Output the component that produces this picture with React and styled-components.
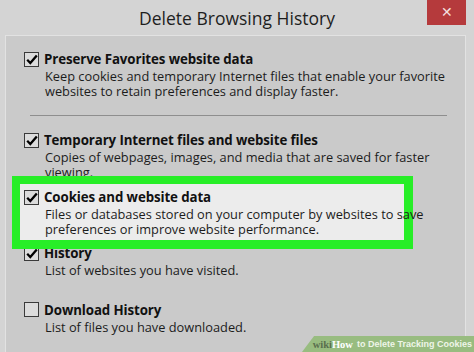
import React from "react";
import styled, { createGlobalStyle } from "styled-components";

// ---------------- Global ----------------

const Global = createGlobalStyle`
  html, body {
    margin: 0;
    padding: 0;
    background: #cdcdcd;
  }
  * { box-sizing: border-box; }
`;

// ---------------- Styled Components ----------------

const Window = styled.div`
  position: relative;
  width: 474px;
  height: 352px;
  overflow: hidden;
  background: #d4d4d4;
  font-family: "Open Sans", "Noto Sans", sans-serif;
  color: #161616;
`;

const TitleBar = styled.div`
  display: grid;
  grid-template-columns: 46px 1fr 46px;
  height: 35px;
`;

const Title = styled.div`
  grid-column: 2;
  text-align: center;
  font-size: 17.5px;
  line-height: 36px;
  color: #1e1e1e;
`;

const CloseBtn = styled.div`
  grid-column: 3;
  width: 39px;
  height: 25px;
  background: #b53a3c;
  color: #f4dede;
  font-size: 14px;
  line-height: 24px;
  text-align: center;
  margin-left: -1px;
`;

const Panel = styled.div`
  margin-left: 5px;
  width: 461px;
  height: 330px;
  background: #cacaca;
  border: 1px solid #e2e2e2;
  border-bottom: none;
  padding: 15px 0 0 18px;
  display: flex;
  flex-direction: column;
`;

const Item = styled.div`
  display: grid;
  grid-template-columns: 15px 1fr;
  column-gap: 5px;
  align-items: center;
  margin-top: ${(p) => p.$top || 0}px;
`;

const Box = styled.div`
  width: 15px;
  height: 15px;
  border: 1px solid #3a3a3a;
  background: #dcdcdc;
  display: flex;
  align-items: center;
  justify-content: center;
`;

const Label = styled.div`
  font-weight: 700;
  font-size: 13.3px;
  line-height: 16px;
  letter-spacing: -0.1px;
  color: #111;
  white-space: nowrap;
`;

const Lines = styled.div`
  grid-column: 2;
  margin-top: 2px;
  padding-left: 1px;
`;

const Desc = styled.div`
  font-size: 12.8px;
  line-height: 14.5px;
  color: #1c1c1c;
  white-space: nowrap;
`;

const Separator = styled.div`
  width: 417px;
  height: 1px;
  margin: 17px 0 0 6px;
  background: #8e8e8e;
`;

const Highlight = styled.div`
  position: relative;
  z-index: 1;
  width: 401px;
  margin: -3px 0 -4px -12px;
  border: 8px solid #27ee27;
  border-right-width: 9px;
  border-bottom-width: 9px;
  background: #ececec;
  padding: 5px 0 4px 4px;
`;

const Badge = styled.div`
  position: absolute;
  right: 0;
  bottom: 0;
  width: 172px;
  height: 16px;
  background: #98bc80;
  clip-path: polygon(7% 0, 100% 0, 100% 100%, 0 100%);
  display: flex;
  align-items: center;
  justify-content: flex-end;
  padding-right: 2px;
  font-family: "Liberation Sans", Arial, sans-serif;
  font-weight: 700;
  font-size: 9px;
  color: #eef5e8;
  white-space: nowrap;
`;

const Wiki = styled.span`
  font-family: "Liberation Serif", serif;
  font-size: 10.5px;
  color: #5a6f4e;
`;

const How = styled.span`
  font-family: "Liberation Serif", serif;
  font-size: 10.5px;
  color: #ffffff;
  margin-right: 4px;
`;

// ---------------- Parts ----------------

function Check({ checked }) {
  return (
    <Box>
      {checked && (
        <svg width="12" height="11" viewBox="0 0 12 11">
          <path
            d="M1.2 5.8 L4.3 9 L10.8 1.4"
            fill="none"
            stroke="#000"
            strokeWidth="2.3"
          />
        </svg>
      )}
    </Box>
  );
}

function Option({ checked, label, lines, top }) {
  return (
    <Item $top={top}>
      <Check checked={checked} />
      <Label>{label}</Label>
      <Lines>
        {lines.map((l, i) => (
          <Desc key={i}>{l}</Desc>
        ))}
      </Lines>
    </Item>
  );
}

// ---------------- Component ----------------

export default function App() {
  return (
    <Window>
      <Global />
      <TitleBar>
        <Title>Delete Browsing History</Title>
        <CloseBtn>✕</CloseBtn>
      </TitleBar>
      <Panel>
        <Option
          checked
          label="Preserve Favorites website data"
          lines={[
            "Keep cookies and temporary Internet files that enable your favorite",
            "websites to retain preferences and display faster.",
          ]}
        />
        <Separator />
        <Option
          checked
          top={16}
          label="Temporary Internet files and website files"
          lines={[
            "Copies of webpages, images, and media that are saved for faster",
            "viewing.",
          ]}
        />
        <Highlight>
          <Option
            checked
            label="Cookies and website data"
            lines={[
              "Files or databases stored on your computer by websites to save",
              "preferences or improve website performance.",
            ]}
          />
        </Highlight>
        <Option
          checked
          label="History"
          lines={["List of websites you have visited."]}
        />
        <Option
          top={24}
          label="Download History"
          lines={["List of files you have downloaded."]}
        />
      </Panel>
      <Badge>
        <Wiki>wiki</Wiki>
        <How>How</How>
        to Delete Tracking Cookies
      </Badge>
    </Window>
  );
}
